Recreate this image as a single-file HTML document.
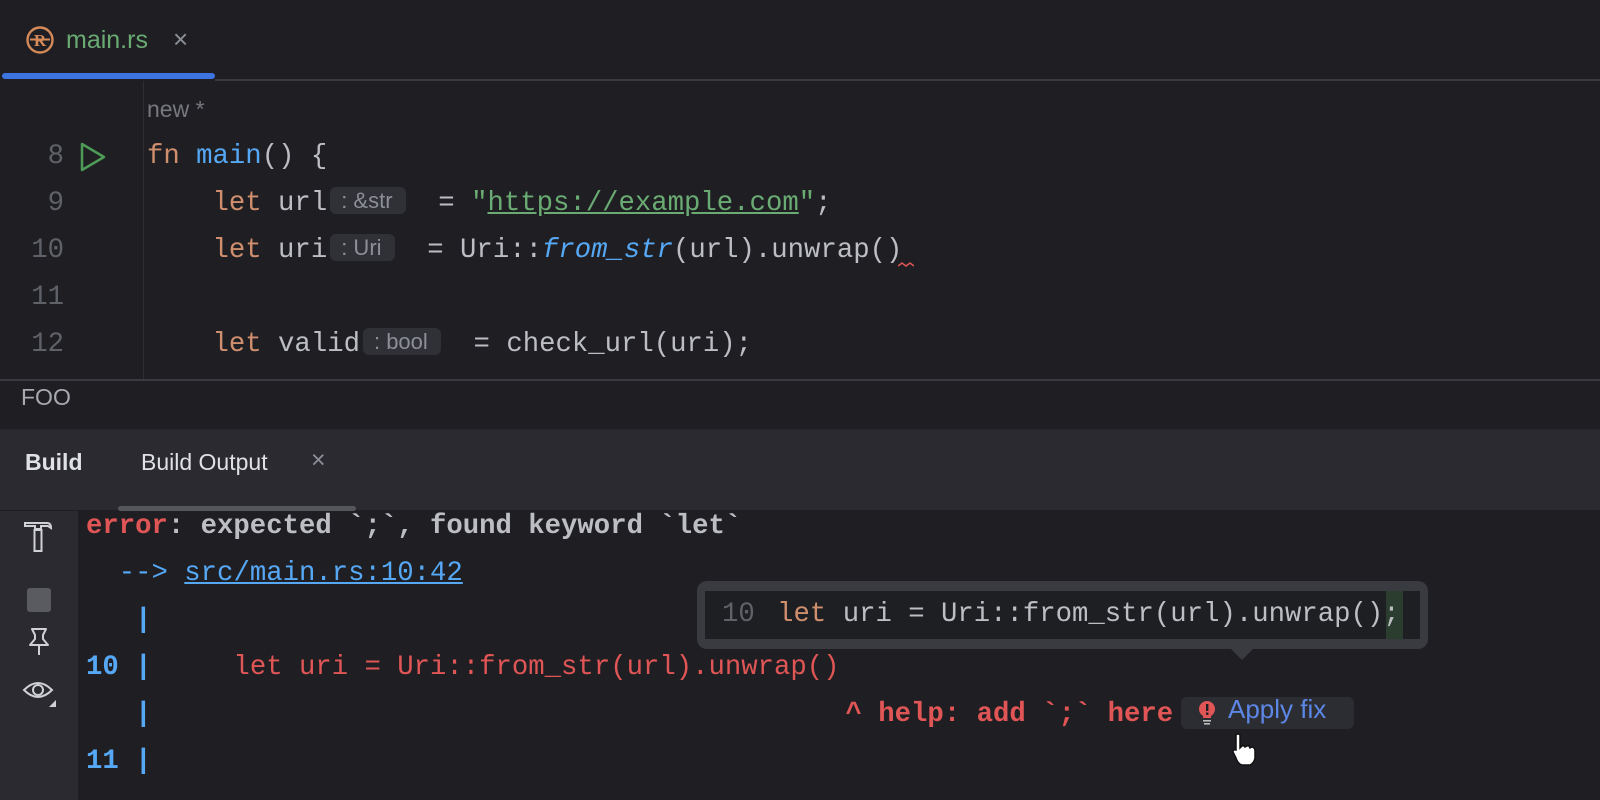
<!DOCTYPE html>
<html><head><meta charset="utf-8"><style>
*{margin:0;padding:0;box-sizing:border-box}
body{width:1600px;height:800px;background:#1f1f23;overflow:hidden;position:relative;font-family:"Liberation Sans",sans-serif}
.abs{position:absolute}
.mono{font-family:"Liberation Mono",monospace;font-size:27.3px;white-space:normal;line-height:47px}
.mono>div{white-space:pre;height:47px}
.k{color:#cf8e6d}.t{color:#bcbec4}.f{color:#56a8f5}.s{color:#6aab73}
.hint{display:inline-block;background:#303136;color:#8c8f96;font-family:"Liberation Sans",sans-serif;font-size:22px;border-radius:6px;height:27px;line-height:27px;padding:0 13px 0 11px;vertical-align:2px;margin-left:3px}
.ln{color:#5f6168;width:64px;text-align:right;display:inline-block}
.r{color:#e05555}.b{color:#56a8f5}
</style></head><body>
<svg class="abs" style="left:26px;top:26px" width="28" height="28" viewBox="0 0 28 28"><circle cx="14" cy="14" r="12.5" fill="none" stroke="#d58a5a" stroke-width="2.4"/><text x="14" y="20" text-anchor="middle" font-family="Liberation Serif" font-weight="bold" font-size="17" fill="#d58a5a">R</text><rect x="4" y="12.5" width="20" height="2" fill="#d58a5a"/></svg>
<div class="abs" style="left:66px;top:26px;font-size:25px;color:#6aab73">main.rs</div>
<div class="abs" style="left:173px;top:24px;font-size:26px;color:#8c8f96">×</div>
<div class="abs" style="left:2px;top:73px;width:213px;height:6px;background:#3d74e0;border-radius:3px"></div>
<div class="abs" style="left:215px;top:79px;width:1385px;height:2px;background:#3a3a40"></div>
<div class="abs" style="left:143px;top:81px;width:1px;height:299px;background:#2e2f34"></div>
<div class="abs" style="left:147px;top:96px;font-size:23px;color:#76787e">new *</div>
<div class="abs mono" style="left:0;top:133px"><div><span class="ln">8</span></div><div><span class="ln">9</span></div><div><span class="ln">10</span></div><div><span class="ln">11</span></div><div><span class="ln">12</span></div></div>
<svg class="abs" style="left:79px;top:142px" width="28" height="30"><path d="M3 2 L25 15 L3 28 Z" fill="none" stroke="#4e9a57" stroke-width="2.5" stroke-linejoin="round"/></svg>
<div class="abs mono" style="left:147px;top:133px;height:246px;overflow:hidden;width:1450px"><div><span class="k">fn</span> <span class="f">main</span><span class="t">() {</span></div><div><span class="k">    let</span><span class="t"> url</span><span class="hint">: &amp;str</span><span class="t">  = </span><span class="s">"<u>https://example.com</u>"</span><span class="t">;</span></div><div><span class="k">    let</span><span class="t"> uri</span><span class="hint">: Uri</span><span class="t">  = Uri::</span><span class="f"><i>from_str</i></span><span class="t">(url).unwrap()</span></div><div> </div><div><span class="k">    let</span><span class="t"> valid</span><span class="hint">: bool</span><span class="t">  = check_url(uri);</span></div></div>
<svg class="abs" style="left:898px;top:262px" width="16" height="6"><path d="M0 4 L4 1 L8 4 L12 1 L16 4" stroke="#e05555" fill="none" stroke-width="1.5"/></svg>
<div class="abs" style="left:0;top:379px;width:1600px;height:2px;background:#3a3a40"></div>
<div class="abs" style="left:0;top:381px;width:1600px;height:48px;background:#1f1f23"></div>
<div class="abs" style="left:21px;top:384px;font-size:23px;color:#a8aab0">FOO</div>
<div class="abs" style="left:0;top:429px;width:1600px;height:81px;background:#2b2a30;border-top:1px solid #26262b"></div>
<div class="abs" style="left:25px;top:449px;font-size:23px;font-weight:bold;color:#dfe1e5">Build</div>
<div class="abs" style="left:141px;top:449px;font-size:23px;color:#dfe1e5">Build Output</div>
<div class="abs" style="left:311px;top:446px;font-size:25px;color:#8c8f96">×</div>
<div class="abs" style="left:118px;top:506px;width:238px;height:5px;background:#55565c;border-radius:3px"></div>
<div class="abs" style="left:0;top:511px;width:78px;height:289px;background:#2b2a30"></div>
<svg class="abs" style="left:22px;top:520px" width="32" height="34" viewBox="0 0 32 34"><path d="M3 3 H25 Q29 3 29 8 L26 6 H19 V9 H13 V6 H3 Z" fill="none" stroke="#cfd1d6" stroke-width="2"/><rect x="12.5" y="10" width="7" height="21" fill="none" stroke="#cfd1d6" stroke-width="2"/></svg>
<div class="abs" style="left:27px;top:588px;width:24px;height:24px;background:#5a5b60;border-radius:3px"></div>
<svg class="abs" style="left:26px;top:627px" width="26" height="30" viewBox="0 0 26 30"><path d="M6 2 H20 L17 8 V12 L22 18 H4 L9 12 V8 Z M13 18 V28" fill="none" stroke="#cfd1d6" stroke-width="2" stroke-linejoin="round"/></svg>
<svg class="abs" style="left:22px;top:678px" width="36" height="30" viewBox="0 0 36 30"><path d="M2 12 Q16 -2 30 12 Q16 26 2 12 Z" fill="none" stroke="#cfd1d6" stroke-width="2"/><circle cx="16" cy="12" r="5" fill="none" stroke="#cfd1d6" stroke-width="2"/><path d="M34 22 L34 29 L27 29 Z" fill="#cfd1d6"/></svg>
<div class="abs mono" style="left:86px;top:503px;font-weight:bold"><div><span class="r">error</span><span class="t">: expected `;`, found keyword `let`</span></div><div style="font-weight:normal"><span class="b">  --&gt; <u>src/main.rs:10:42</u></span></div><div class="b">   |</div><div><span class="b">10 |</span><span class="r" style="font-weight:normal">     let uri = Uri::from_str(url).unwrap()</span></div><div><span class="b">   |</span><span class="r">                                          <span style="margin-left:6px">^ help: add `;` here</span></span></div><div class="b">11 |</div></div>
<div class="abs" style="left:1181px;top:697px;width:173px;height:32px;background:#2c2d32;border-radius:6px"></div>
<svg class="abs" style="left:1196px;top:699px" width="22" height="30" viewBox="0 0 22 30"><circle cx="11" cy="10" r="8" fill="#e05555"/><path d="M7 15 H15 V19 H7 Z" fill="#e05555"/><rect x="10" y="5" width="2.4" height="7" fill="#1f1f23"/><rect x="10" y="13.5" width="2.4" height="2.4" fill="#1f1f23"/><rect x="7" y="21" width="8" height="1.6" fill="#bbb"/><rect x="8" y="24" width="6" height="1.6" fill="#bbb"/></svg>
<div class="abs" style="left:1228px;top:694px;font-size:26px;color:#5c87e6">Apply fix</div>
<svg class="abs" style="left:1230px;top:732px" width="30" height="36" viewBox="0 0 30 36"><path d="M6 3 Q8 1 10 3 V16 L12 14 Q14 13 15 15 L17 14 Q19 13 20 16 L22 15 Q24 15 25 18 V26 Q24 31 20 33 H12 Q8 32 6 26 L3 20 Q3 17 6 18 V3 Z" fill="#fff" stroke="#111" stroke-width="1.5"/></svg>
<div class="abs" style="left:697px;top:581px;width:731px;height:68px;background:#3a3b40;border-radius:10px"></div>
<div class="abs" style="left:1229px;top:647px;width:0;height:0;border-left:13px solid transparent;border-right:13px solid transparent;border-top:13px solid #3a3b40"></div>
<div class="abs" style="left:705px;top:591px;width:715px;height:48px;background:#1e1f22"></div>
<div class="abs" style="left:1386px;top:591px;width:17px;height:48px;background:#2b3d2e"></div>
<div class="abs" style="left:722px;top:591px;font-family:'Liberation Mono',monospace;font-size:27.3px;line-height:48px;white-space:pre"><span style="color:#5f6168">10</span> <span class="k" style="margin-left:6px">let</span><span class="t"> uri = Uri::from_str(url).unwrap();</span></div>
</body></html>
